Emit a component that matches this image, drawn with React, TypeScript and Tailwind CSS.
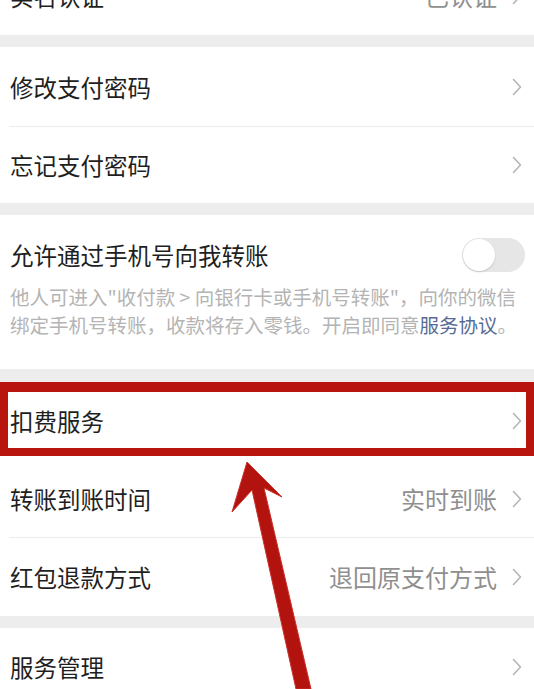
import React from "react";

const font = { fontFamily: '"Noto Sans CJK SC", "Noto Sans", sans-serif' };

function Chevron() {
  return (
    <svg width="10" height="18" viewBox="0 0 10 18" className="shrink-0">
      <path d="M1.5 1.5 L8.5 9 L1.5 16.5" fill="none" stroke="#b5b5b5" strokeWidth="1.6" strokeLinecap="round" strokeLinejoin="round" />
    </svg>
  );
}

function Row({ label, value, h, divider }: { label: string; value?: string; h: string; divider?: boolean }) {
  return (
    <div className="bg-white">
      <div className={`flex items-center pl-[10px] pr-[12px] ${h}`}>
        <span className="flex-1 text-[23.5px] leading-[30px] text-[#1f1f1f] whitespace-nowrap">{label}</span>
        {value && <span className="text-[24px] leading-[30px] text-[#8f8f8f] mr-[15px] whitespace-nowrap">{value}</span>}
        <Chevron />
      </div>
      {divider && <div className="ml-[9px] h-px bg-[#ececec]" />}
    </div>
  );
}

export default function App() {
  return (
    <div className="relative w-[534px] h-[689px] overflow-hidden bg-[#ededed]" style={font}>
      <div className="-mt-[43px]">
        <Row label="实名认证" value="已认证" h="h-[78px]" />
        <div className="h-[12px]" />
        <Row label="修改支付密码" h="h-[79px]" divider />
        <Row label="忘记支付密码" h="h-[76px]" />
        <div className="h-[12px]" />
        <div className="bg-white h-[154px] pl-[10px] pr-[9px] pt-[22px]">
          <div className="flex items-center justify-between">
            <span className="text-[23.5px] leading-[36px] text-[#1f1f1f] whitespace-nowrap">允许通过手机号向我转账</span>
            <div className="w-[63px] h-[34px] rounded-full bg-[#e6e6e6] p-[1px] flex items-center">
              <div className="w-[32px] h-[32px] rounded-full bg-white shadow-[0_1px_2px_rgba(0,0,0,0.15)]" />
            </div>
          </div>
          <div className="mt-[10px] text-[19.5px] leading-[28px] text-[#b4b4b4] whitespace-nowrap">
            <div>他人可进入"收付款 &gt; 向银行卡或手机号转账"，向你的微信</div>
            <div>
              绑定手机号转账，收款将存入零钱。开启即同意<span className="text-[#576b95]">服务协议</span>。
            </div>
          </div>
        </div>
        <div className="h-[13px]" />
        <Row label="扣费服务" h="h-[78px]" />
        <Row label="转账到账时间" value="实时到账" h="h-[77px]" divider />
        <Row label="红包退款方式" value="退回原支付方式" h="h-[78px]" />
        <div className="h-[12px]" />
        <Row label="服务管理" h="h-[78px]" />
      </div>

      <div className="absolute left-0 right-0 top-[382px] h-[74px] border-[8px] border-t-[10px] border-[#b8150f]" />

      <svg className="absolute left-0 top-0" width="534" height="689" viewBox="0 0 534 689">
        <path
          d="M247 462 L282 497 L264 488 L311 689 L296 689 L252 490 L232 512 Z"
          fill="#b3130e"
          stroke="#c9312a"
          strokeWidth="1"
          strokeLinejoin="round"
        />
      </svg>
    </div>
  );
}
